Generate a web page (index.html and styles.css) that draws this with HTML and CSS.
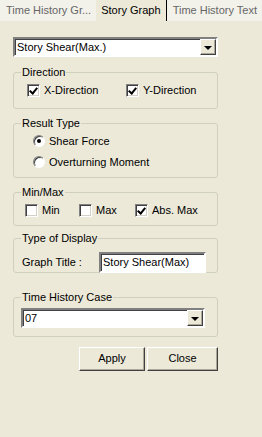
FILE: index.html
```html
<!DOCTYPE html>
<html lang="en">
<head>
    <meta charset="UTF-8">
    <title>Story Graph</title>
    <link rel="stylesheet" href="styles.css">
</head>
<body>
    <div class="window">
        <!-- Tabs -->
        <div class="tabs">
            <span class="tab">Time History Gr...</span>
            <span class="tab active">Story Graph</span>
            <span class="tab">Time History Text</span>
        </div>

        <div class="panel">
            <div class="combo wide">
                <span class="combo-text">Story Shear(Max.)</span>
                <span class="combo-btn"><span class="arrow"></span></span>
            </div>

            <fieldset class="group dir-group">
                <legend>Direction</legend>
                <div class="row">
                    <label class="check"><span class="box checked"></span>X-Direction</label>
                    <label class="check"><span class="box checked"></span>Y-Direction</label>
                </div>
            </fieldset>

            <fieldset class="group result-group">
                <legend>Result Type</legend>
                <label class="radio"><span class="dot on"></span>Shear Force</label>
                <label class="radio"><span class="dot"></span>Overturning Moment</label>
            </fieldset>

            <fieldset class="group minmax-group">
                <legend>Min/Max</legend>
                <div class="row">
                    <label class="check"><span class="box"></span>Min</label>
                    <label class="check"><span class="box"></span>Max</label>
                    <label class="check"><span class="box checked"></span>Abs. Max</label>
                </div>
            </fieldset>

            <fieldset class="group display-group">
                <legend>Type of Display</legend>
                <div class="row">
                    <span class="field-label">Graph Title :</span>
                    <span class="text-box">Story Shear(Max)</span>
                </div>
            </fieldset>

            <fieldset class="group case-group">
                <legend>Time History Case</legend>
                <div class="combo">
                    <span class="combo-text">07</span>
                    <span class="combo-btn"><span class="arrow"></span></span>
                </div>
            </fieldset>

            <div class="buttons">
                <span class="button apply">Apply</span>
                <span class="button close">Close</span>
            </div>
        </div>
    </div>
</body>
</html>
```

FILE: styles.css
```css
* {
    box-sizing: border-box;
    margin: 0;
    padding: 0;
}

body {
    background-color: #ece9d8;
    color: #000;
    font-family: "Liberation Sans", Arial, sans-serif;
    font-size: 11px;
    line-height: 13px;
    width: 262px;
    height: 437px;
    overflow: hidden;
}

.tabs {
    display: flex;
    height: 21px;
    align-items: center;
    background-color: #f2f1ea;
    color: #666;
}

.tab {
    padding: 0 5px;
    white-space: nowrap;
}

.tab:first-child {
    padding-left: 6px;
    width: 97px;
}

.tab.active {
    color: #000;
    background-color: #ece9d8;
    height: 21px;
    line-height: 21px;
    padding: 0 4px 0 5px;
    border-right: 1px solid #000;
    width: 71px;
}

.tab:last-child {
    padding-left: 6px;
}

.panel {
    padding: 16px 44px 0 13px;
}

.combo {
    display: flex;
    align-items: center;
    height: 20px;
    background-color: #fff;
    border: 2px solid;
    border-color: #808080 #fff #fff #808080;
    box-shadow: inset 1px 1px 0 #404040;
}

.combo.wide {
    width: 205px;
}

.combo-text {
    flex: 1;
    padding-left: 2px;
}

.combo-btn {
    width: 16px;
    height: 16px;
    background-color: #ece9d8;
    border: 1px solid;
    border-color: #fff #404040 #404040 #fff;
    box-shadow: inset -1px -1px 0 #aca899;
    display: flex;
    align-items: center;
    justify-content: center;
}

.arrow {
    width: 0;
    height: 0;
    border-left: 4px solid transparent;
    border-right: 4px solid transparent;
    border-top: 4px solid #000;
    margin-top: 1px;
}

.group {
    border: 1px solid #d0d0bf;
    border-radius: 3px;
    padding: 3px 8px 8px 7px;
    width: 205px;
    min-width: 0;
}

.group legend {
    padding: 0 1px;
}

.dir-group {
    margin-top: 9px;
    height: 43px;
    padding-top: 5px;
}

.dir-group .row {
    padding-left: 6px;
}

.result-group {
    margin-top: 8px;
    height: 61px;
    padding-top: 1px;
}

.result-group .radio {
    margin-left: 12px;
}

.minmax-group {
    margin-top: 8px;
    height: 40px;
    padding-top: 5px;
}

.minmax-group .row {
    padding-left: 4px;
}

.display-group {
    margin-top: 6px;
    height: 41px;
}

.display-group .row {
    margin-top: 4px;
    padding-left: 1px;
}

.case-group {
    margin-top: 18px;
    height: 46px;
    padding: 4px 12px 0 7px;
}

.case-group .combo {
    width: 184px;
}

.row {
    display: flex;
    align-items: center;
}

.check, .radio {
    display: flex;
    align-items: center;
    white-space: nowrap;
    flex-shrink: 0;
}

.dir-group .check:first-child {
    width: 99px;
}

.minmax-group .check:nth-child(1) {
    width: 54px;
}

.minmax-group .check:nth-child(2) {
    width: 56px;
}

.box {
    width: 13px;
    height: 13px;
    margin-right: 4px;
    background-color: #fff;
    border: 1px solid;
    border-color: #808080 #fff #fff #808080;
    box-shadow: inset 1px 1px 0 #404040, inset -1px -1px 0 #d4d0c8;
    position: relative;
}

.box.checked::after {
    content: "";
    position: absolute;
    left: 3px;
    top: 1px;
    width: 3px;
    height: 6px;
    border: solid #000;
    border-width: 0 2px 2px 0;
    transform: rotate(40deg);
}

.radio {
    height: 20px;
}

.radio + .radio {
    margin-top: 1px;
}

.dot {
    width: 12px;
    height: 12px;
    margin-right: 4px;
    border-radius: 50%;
    background-color: #fff;
    border: 1px solid;
    border-color: #808080 #fff #fff #808080;
    box-shadow: inset 1px 1px 0 #404040;
    position: relative;
}

.dot.on::after {
    content: "";
    position: absolute;
    left: 3px;
    top: 3px;
    width: 4px;
    height: 4px;
    border-radius: 50%;
    background-color: #000;
}

.field-label {
    width: 77px;
}

.text-box {
    width: 107px;
    height: 21px;
    line-height: 17px;
    padding-left: 2px;
    background-color: #fff;
    border: 2px solid;
    border-color: #808080 #fff #fff #808080;
    box-shadow: inset 1px 1px 0 #404040;
}

.buttons {
    display: flex;
    gap: 2px;
    margin-top: 10px;
    padding-left: 66px;
}

.button {
    width: 68px;
    height: 24px;
    line-height: 20px;
    text-align: center;
    border: 1px solid;
    border-color: #fff #404040 #404040 #fff;
    box-shadow: inset -1px -1px 0 #aca899;
}

.button.close {
    width: 73px;
}
```
